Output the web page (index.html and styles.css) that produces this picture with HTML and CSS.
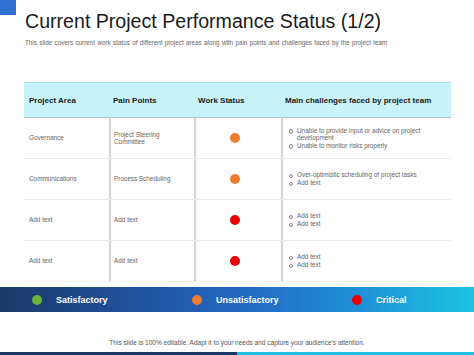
FILE: index.html
```html
<!DOCTYPE html>
<html>
<head>
<meta charset="utf-8">
<link rel="stylesheet" href="styles.css">
</head>
<body>
<div class="slide">
  <div class="corner"></div>
  <header class="head">
    <h1 class="title">Current Project Performance Status (1/2)</h1>
    <p class="subtitle">This slide covers current work status of different project areas along with pain points and challenges faced by the project team</p>
  </header>

  <section class="table">
    <div class="row hrow">
      <div class="hcell">Project Area</div>
      <div class="hcell">Pain Points</div>
      <div class="hcell">Work Status</div>
      <div class="hcell">Main challenges faced by project team</div>
    </div>
    <div class="row brow">
      <div class="cell">Governance</div>
      <div class="cell sep">Project Steering<br>Committee</div>
      <div class="cell sep status"><span class="dot orange"></span></div>
      <div class="cell sep">
        <ul class="list">
          <li>Unable to provide input or advice on project<br>development</li>
          <li>Unable to monitor risks properly</li>
        </ul>
      </div>
    </div>
    <div class="row brow">
      <div class="cell">Communications</div>
      <div class="cell sep">Process Scheduling</div>
      <div class="cell sep status"><span class="dot orange"></span></div>
      <div class="cell sep">
        <ul class="list">
          <li>Over-optimistic scheduling of project tasks</li>
          <li>Add text</li>
        </ul>
      </div>
    </div>
    <div class="row brow">
      <div class="cell">Add text</div>
      <div class="cell sep">Add text</div>
      <div class="cell sep status"><span class="dot red"></span></div>
      <div class="cell sep">
        <ul class="list">
          <li>Add text</li>
          <li>Add text</li>
        </ul>
      </div>
    </div>
    <div class="row brow last">
      <div class="cell">Add text</div>
      <div class="cell sep">Add text</div>
      <div class="cell sep status"><span class="dot red"></span></div>
      <div class="cell sep">
        <ul class="list">
          <li>Add text</li>
          <li>Add text</li>
        </ul>
      </div>
    </div>
  </section>

  <div class="legend">
    <div class="item"><span class="dot green"></span><span class="label">Satisfactory</span></div>
    <div class="item"><span class="dot orange"></span><span class="label">Unsatisfactory</span></div>
    <div class="item"><span class="dot red"></span><span class="label">Critical</span></div>
  </div>

  <p class="footer">This slide is 100% editable. Adapt it to your needs and capture your audience's attention.</p>
  <div class="bottombar"><div class="navy"></div><div class="cyan"></div></div>
</div>
</body>
</html>
```

FILE: styles.css
```css
* { box-sizing: border-box; }
html, body { margin: 0; padding: 0; background: #fff; }
body { font-family: "Liberation Sans", Arial, sans-serif; }

.slide {
  position: relative;
  width: 474px;
  height: 355px;
  overflow: hidden;
  display: flex;
  flex-direction: column;
}

.corner {
  position: absolute;
  left: 0;
  top: 0;
  width: 16px;
  height: 15px;
  background: #2f6fcf;
}

.head {
  height: 82px;
  padding: 9px 0 0 25px;
}

.title {
  margin: 0;
  font-family: "Liberation Sans", Arial, sans-serif;
  font-weight: normal;
  font-size: 19.6px;
  line-height: 24px;
  color: #1a1a1a;
  letter-spacing: 0;
}

.subtitle {
  margin: 6px 0 0 0;
  font-size: 6.3px;
  line-height: 8px;
  color: #666;
  word-spacing: 0.6px;
}

.table {
  margin-left: 24px;
  width: 427px;
  border-top: 1px solid #a9dbe6;
}

.row {
  display: grid;
  grid-template-columns: 85px 85px 87px 170px;
}

.hrow {
  height: 35px;
  background: #c9f3fb;
  border-bottom: 1px solid #a7c9d0;
  align-items: center;
}

.hcell {
  padding-left: 5px;
  font-weight: bold;
  font-size: 8px;
  color: #1a1a1a;
}
.hcell:nth-child(2), .hcell:nth-child(3), .hcell:nth-child(4) { padding-left: 4px; }

.brow {
  height: 41px;
  border-bottom: 1px solid #ececec;
}
.brow.last { border-bottom: 1px solid #f2f2f2; }

.cell {
  display: flex;
  flex-direction: column;
  justify-content: center;
  padding-left: 5px;
  font-size: 6.4px;
  line-height: 7.3px;
  color: #666;
}
.cell.sep {
  border-left: 2px solid #d4d4d4;
  padding-left: 3px;
}
.cell.status {
  align-items: center;
  padding-left: 0;
  padding-right: 8px;
}

.dot {
  display: inline-block;
  width: 10px;
  height: 10px;
  border-radius: 50%;
}
.orange { background: #ef7d32; }
.red { background: #e80000; }
.green { background: #6db340; }

.list {
  list-style: none;
  margin: 0;
  padding: 0 0 0 11px;
}
.list li {
  position: relative;
  line-height: 7.6px;
}
.list li::before {
  content: "";
  position: absolute;
  left: -8px;
  top: 2.6px;
  width: 2.4px;
  height: 2.4px;
  border: 0.6px solid #888;
  border-radius: 50%;
}

.legend {
  margin-top: 5px;
  height: 25px;
  display: flex;
  align-items: center;
  padding-left: 32px;
  background: linear-gradient(to right, #1b3868 0%, #1f4f96 25%, #2367c2 50%, #1f8fd6 75%, #1cc4e3 100%);
}
.item {
  width: 160px;
  flex-shrink: 0;
  display: flex;
  align-items: center;
}
.item .dot { width: 10px; height: 10px; }
.label {
  margin-left: 14px;
  color: #fff;
  font-weight: bold;
  font-size: 9px;
}

.footer {
  margin: 27px 0 0 0;
  text-align: center;
  font-size: 6.5px;
  line-height: 8px;
  color: #555;
}

.bottombar {
  margin-top: auto;
  height: 3px;
  display: flex;
}
.navy { width: 237px; background: #1b3564; }
.cyan { flex: 1; background: #1cbfe0; }
```
